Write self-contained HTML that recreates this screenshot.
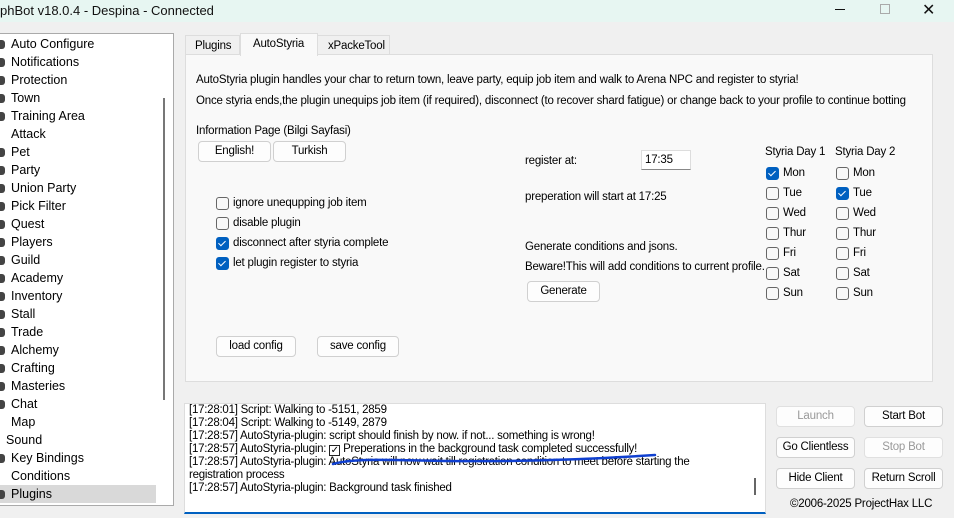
<!DOCTYPE html>
<html><head><meta charset="utf-8"><style>
*{margin:0;padding:0;box-sizing:border-box}
body{width:954px;height:518px;overflow:hidden;background:#f0f0f0;font-family:"Liberation Sans",sans-serif;font-size:11.5px;letter-spacing:-0.2px;color:#000;position:relative}
.a{position:absolute;white-space:nowrap}
.btn{position:absolute;background:#fdfdfd;border:1px solid #d0d0d0;border-radius:4px;text-align:center;font-size:11.5px}
.cb{position:absolute;width:13px;height:13px;border:1px solid #666;border-radius:3px;background:#f8f8f8}
.cb.on{background:#0060c0;border-color:#0060c0}
.cb.on:after{content:"";position:absolute;left:3px;top:1px;width:3px;height:6px;border:solid #fff;border-width:0 1px 1px 0;transform:rotate(45deg)}
.li{position:absolute;left:11px;font-size:12.5px;letter-spacing:0}
.ic{position:absolute;left:0;width:5px;height:9px;background:#444;border-radius:0 3px 3px 0}
</style></head><body>
<div class="a" style="left:0;top:0;width:954px;height:22px;background:#e7f6f2"></div>
<div class="a" style="left:0;top:3px;font-size:13px;letter-spacing:0;color:#111">phBot v18.0.4 - Despina - Connected</div>
<div class="a" style="left:835px;top:9px;width:10px;height:1px;background:#111"></div>
<div class="a" style="left:880px;top:4px;width:10px;height:10px;border:1px solid #aaa"></div>
<div class="a" style="left:922px;top:0px;font-size:16px;color:#111">✕</div>

<div class="a" style="left:-1px;top:33px;width:175px;height:473px;background:#fff;border:1px solid #aaa"></div>
<div class="a" style="left:163px;top:98px;width:2px;height:302px;background:#777"></div>
<div class="a" style="left:0;top:485px;width:156px;height:18px;background:#d9d9d9"></div>
<div class="li" style="top:37px">Auto Configure</div>
<div class="li" style="top:55px">Notifications</div>
<div class="li" style="top:73px">Protection</div>
<div class="li" style="top:91px">Town</div>
<div class="li" style="top:109px">Training Area</div>
<div class="li" style="top:127px">Attack</div>
<div class="li" style="top:145px">Pet</div>
<div class="li" style="top:163px">Party</div>
<div class="li" style="top:181px">Union Party</div>
<div class="li" style="top:199px">Pick Filter</div>
<div class="li" style="top:217px">Quest</div>
<div class="li" style="top:235px">Players</div>
<div class="li" style="top:253px">Guild</div>
<div class="li" style="top:271px">Academy</div>
<div class="li" style="top:289px">Inventory</div>
<div class="li" style="top:307px">Stall</div>
<div class="li" style="top:325px">Trade</div>
<div class="li" style="top:343px">Alchemy</div>
<div class="li" style="top:361px">Crafting</div>
<div class="li" style="top:379px">Masteries</div>
<div class="li" style="top:397px">Chat</div>
<div class="li" style="top:415px">Map</div>
<div class="li" style="top:433px;left:6px">Sound</div>
<div class="li" style="top:451px">Key Bindings</div>
<div class="li" style="top:469px">Conditions</div>
<div class="li" style="top:487px">Plugins</div>
<div class="ic" style="top:40px"></div><div class="ic" style="top:58px"></div><div class="ic" style="top:76px"></div><div class="ic" style="top:94px"></div><div class="ic" style="top:112px"></div><div class="ic" style="top:148px"></div><div class="ic" style="top:166px"></div><div class="ic" style="top:184px"></div><div class="ic" style="top:202px"></div><div class="ic" style="top:220px"></div><div class="ic" style="top:238px"></div><div class="ic" style="top:256px"></div><div class="ic" style="top:274px"></div><div class="ic" style="top:292px"></div><div class="ic" style="top:310px"></div><div class="ic" style="top:328px"></div><div class="ic" style="top:346px"></div><div class="ic" style="top:364px"></div><div class="ic" style="top:382px"></div><div class="ic" style="top:400px"></div><div class="ic" style="top:454px"></div><div class="ic" style="top:490px"></div>

<div class="a" style="left:185px;top:54px;width:748px;height:328px;background:#f9f9f9;border:1px solid #ddd"></div>
<div class="a" style="left:185px;top:35px;width:55px;height:20px;background:#f0f0f0;border:1px solid #ddd;padding:4px 0 0 9px">Plugins</div>
<div class="a" style="left:317px;top:35px;width:73px;height:20px;background:#f0f0f0;border:1px solid #ddd;padding:4px 0 0 10px">xPackeTool</div>
<div class="a" style="left:240px;top:33px;width:78px;height:23px;background:#f9f9f9;border:1px solid #ddd;border-bottom:none;padding:4px 0 0 12px">AutoStyria</div>

<div class="a" style="left:196px;top:74px">AutoStyria plugin handles your char to return town, leave party, equip job item and walk to Arena NPC and register to styria!</div>
<div class="a" style="left:196px;top:95px">Once styria ends,the plugin unequips job item (if required), disconnect (to recover shard fatigue) or change back to your profile to continue botting</div>
<div class="a" style="left:196px;top:125px">Information Page (Bilgi Sayfasi)</div>
<div class="btn" style="left:198px;top:141px;width:73px;height:21px;line-height:19px">English!</div>
<div class="btn" style="left:273px;top:141px;width:73px;height:21px;line-height:19px">Turkish</div>

<div class="cb" style="left:216px;top:197px"></div><div class="a" style="left:233px;top:197px">ignore unequpping job item</div>
<div class="cb" style="left:216px;top:217px"></div><div class="a" style="left:233px;top:217px">disable plugin</div>
<div class="cb on" style="left:216px;top:237px"></div><div class="a" style="left:233px;top:237px">disconnect after styria complete</div>
<div class="cb on" style="left:216px;top:257px"></div><div class="a" style="left:233px;top:257px">let plugin register to styria</div>

<div class="btn" style="left:216px;top:336px;width:80px;height:21px;line-height:19px">load config</div>
<div class="btn" style="left:317px;top:336px;width:82px;height:21px;line-height:19px">save config</div>

<div class="a" style="left:525px;top:155px">register at:</div>
<div class="a" style="left:641px;top:150px;width:50px;height:20px;background:#fff;border:1px solid #ddd;border-bottom-color:#888;padding:3px 0 0 3px">17:35</div>
<div class="a" style="left:525px;top:191px">preperation will start at 17:25</div>
<div class="a" style="left:525px;top:241px">Generate conditions and jsons.</div>
<div class="a" style="left:525px;top:261px">Beware!This will add conditions to current profile.</div>
<div class="btn" style="left:527px;top:281px;width:73px;height:21px;line-height:19px">Generate</div>

<div class="a" style="left:765px;top:146px">Styria Day 1</div>
<div class="a" style="left:835px;top:146px">Styria Day 2</div>
<div class="cb on" style="left:766px;top:167px"></div><div class="a" style="left:783px;top:167px">Mon</div>
<div class="cb" style="left:766px;top:187px"></div><div class="a" style="left:783px;top:187px">Tue</div>
<div class="cb" style="left:766px;top:207px"></div><div class="a" style="left:783px;top:207px">Wed</div>
<div class="cb" style="left:766px;top:227px"></div><div class="a" style="left:783px;top:227px">Thur</div>
<div class="cb" style="left:766px;top:247px"></div><div class="a" style="left:783px;top:247px">Fri</div>
<div class="cb" style="left:766px;top:267px"></div><div class="a" style="left:783px;top:267px">Sat</div>
<div class="cb" style="left:766px;top:287px"></div><div class="a" style="left:783px;top:287px">Sun</div>
<div class="cb" style="left:836px;top:167px"></div><div class="a" style="left:853px;top:167px">Mon</div>
<div class="cb on" style="left:836px;top:187px"></div><div class="a" style="left:853px;top:187px">Tue</div>
<div class="cb" style="left:836px;top:207px"></div><div class="a" style="left:853px;top:207px">Wed</div>
<div class="cb" style="left:836px;top:227px"></div><div class="a" style="left:853px;top:227px">Thur</div>
<div class="cb" style="left:836px;top:247px"></div><div class="a" style="left:853px;top:247px">Fri</div>
<div class="cb" style="left:836px;top:267px"></div><div class="a" style="left:853px;top:267px">Sat</div>
<div class="cb" style="left:836px;top:287px"></div><div class="a" style="left:853px;top:287px">Sun</div>

<div class="a" style="left:184px;top:403px;width:582px;height:111px;background:#fff;border:1px solid #ddd;border-bottom:2px solid #0060c0"></div>
<div class="a" style="left:754px;top:478px;width:2px;height:17px;background:#666"></div>
<div class="a" style="left:189px;top:404px;line-height:13px;font-size:11.5px;letter-spacing:-0.25px">[17:28:01] Script: Walking to -5151, 2859<br>[17:28:04] Script: Walking to -5149, 2879<br>[17:28:57] AutoStyria-plugin: script should finish by now. if not... something is wrong!<br>[17:28:57] AutoStyria-plugin: <span style="display:inline-block;width:11px;height:11px;border:1px solid #222;vertical-align:-1px;font-size:10px;line-height:9px;text-align:center">✓</span> Preperations in the background task completed successfully!<br>[17:28:57] AutoStyria-plugin: AutoStyria will now wait till registration condition to meet before starting the<br>registration process<br>[17:28:57] AutoStyria-plugin: Background task finished</div>
<svg class="a" style="left:325px;top:450px" width="340" height="18"><path d="M8 14 C30 8 60 10 120 11 C200 12 270 9 330 5" stroke="#1040d0" stroke-width="2.5" fill="none" stroke-linecap="round"/></svg>

<div class="btn" style="left:776px;top:406px;width:79px;height:21px;line-height:19px;color:#999;border-color:#e0e0e0">Launch</div>
<div class="btn" style="left:864px;top:406px;width:79px;height:21px;line-height:19px">Start Bot</div>
<div class="btn" style="left:776px;top:437px;width:79px;height:21px;line-height:19px">Go Clientless</div>
<div class="btn" style="left:864px;top:437px;width:79px;height:21px;line-height:19px;color:#999;border-color:#e0e0e0">Stop Bot</div>
<div class="btn" style="left:776px;top:468px;width:79px;height:21px;line-height:19px">Hide Client</div>
<div class="btn" style="left:864px;top:468px;width:79px;height:21px;line-height:19px">Return Scroll</div>
<div class="a" style="left:790px;top:498px">©2006-2025 ProjectHax LLC</div>
</body></html>
